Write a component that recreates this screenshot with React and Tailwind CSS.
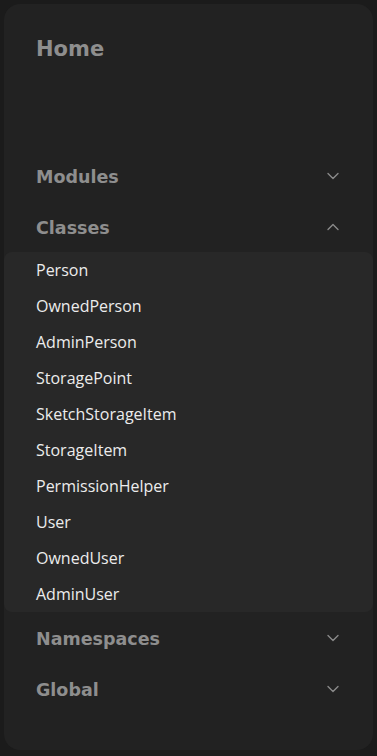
import React, { useState } from "react";
import { ChevronDown, ChevronUp } from "lucide-react";

const classes = [
  "Person",
  "OwnedPerson",
  "AdminPerson",
  "StoragePoint",
  "SketchStorageItem",
  "StorageItem",
  "PermissionHelper",
  "User",
  "OwnedUser",
  "AdminUser",
];

const Section = ({ title, open, onToggle }) => (
  <button
    onClick={onToggle}
    className="flex w-full h-[51px] items-center justify-between pl-[32px] pr-[30px] text-left"
  >
    <span
      className="pt-[4px] text-[17.5px] font-bold text-[#8e8e8e]"
      style={{ fontFamily: '"DejaVu Sans", sans-serif' }}
    >
      {title}
    </span>
    {open ? (
      <ChevronUp size={20} strokeWidth={1.6} className="text-[#8b8b8b]" />
    ) : (
      <ChevronDown size={20} strokeWidth={1.6} className="text-[#8b8b8b]" />
    )}
  </button>
);

export default function App() {
  const [open, setOpen] = useState("Classes");

  const toggle = (name) => setOpen(open === name ? null : name);

  return (
    <div className="min-h-[756px] bg-[#1b1b1b] p-1">
      <div className="rounded-2xl bg-[#222222] pt-[32px] pb-[36px] min-h-[746px]">
        <div
          className="pl-[32px] h-[28px] flex items-center text-[21px] font-bold text-[#8e8e8e]"
          style={{ fontFamily: '"DejaVu Sans", sans-serif' }}
        >
          Home
        </div>
        <div className="mt-[86px]">
          <Section title="Modules" open={open === "Modules"} onToggle={() => toggle("Modules")} />
          <Section title="Classes" open={open === "Classes"} onToggle={() => toggle("Classes")} />
          {open === "Classes" && (
            <ul className="bg-[#282828] rounded-lg">
              {classes.map((c) => (
                <li
                  key={c}
                  className="h-[36px] flex items-center pl-[32px] text-[16px] text-[#ececec]"
                  style={{ fontFamily: '"Open Sans", sans-serif' }}
                >
                  {c}
                </li>
              ))}
            </ul>
          )}
          <Section title="Namespaces" open={open === "Namespaces"} onToggle={() => toggle("Namespaces")} />
          <Section title="Global" open={open === "Global"} onToggle={() => toggle("Global")} />
        </div>
      </div>
    </div>
  );
}
